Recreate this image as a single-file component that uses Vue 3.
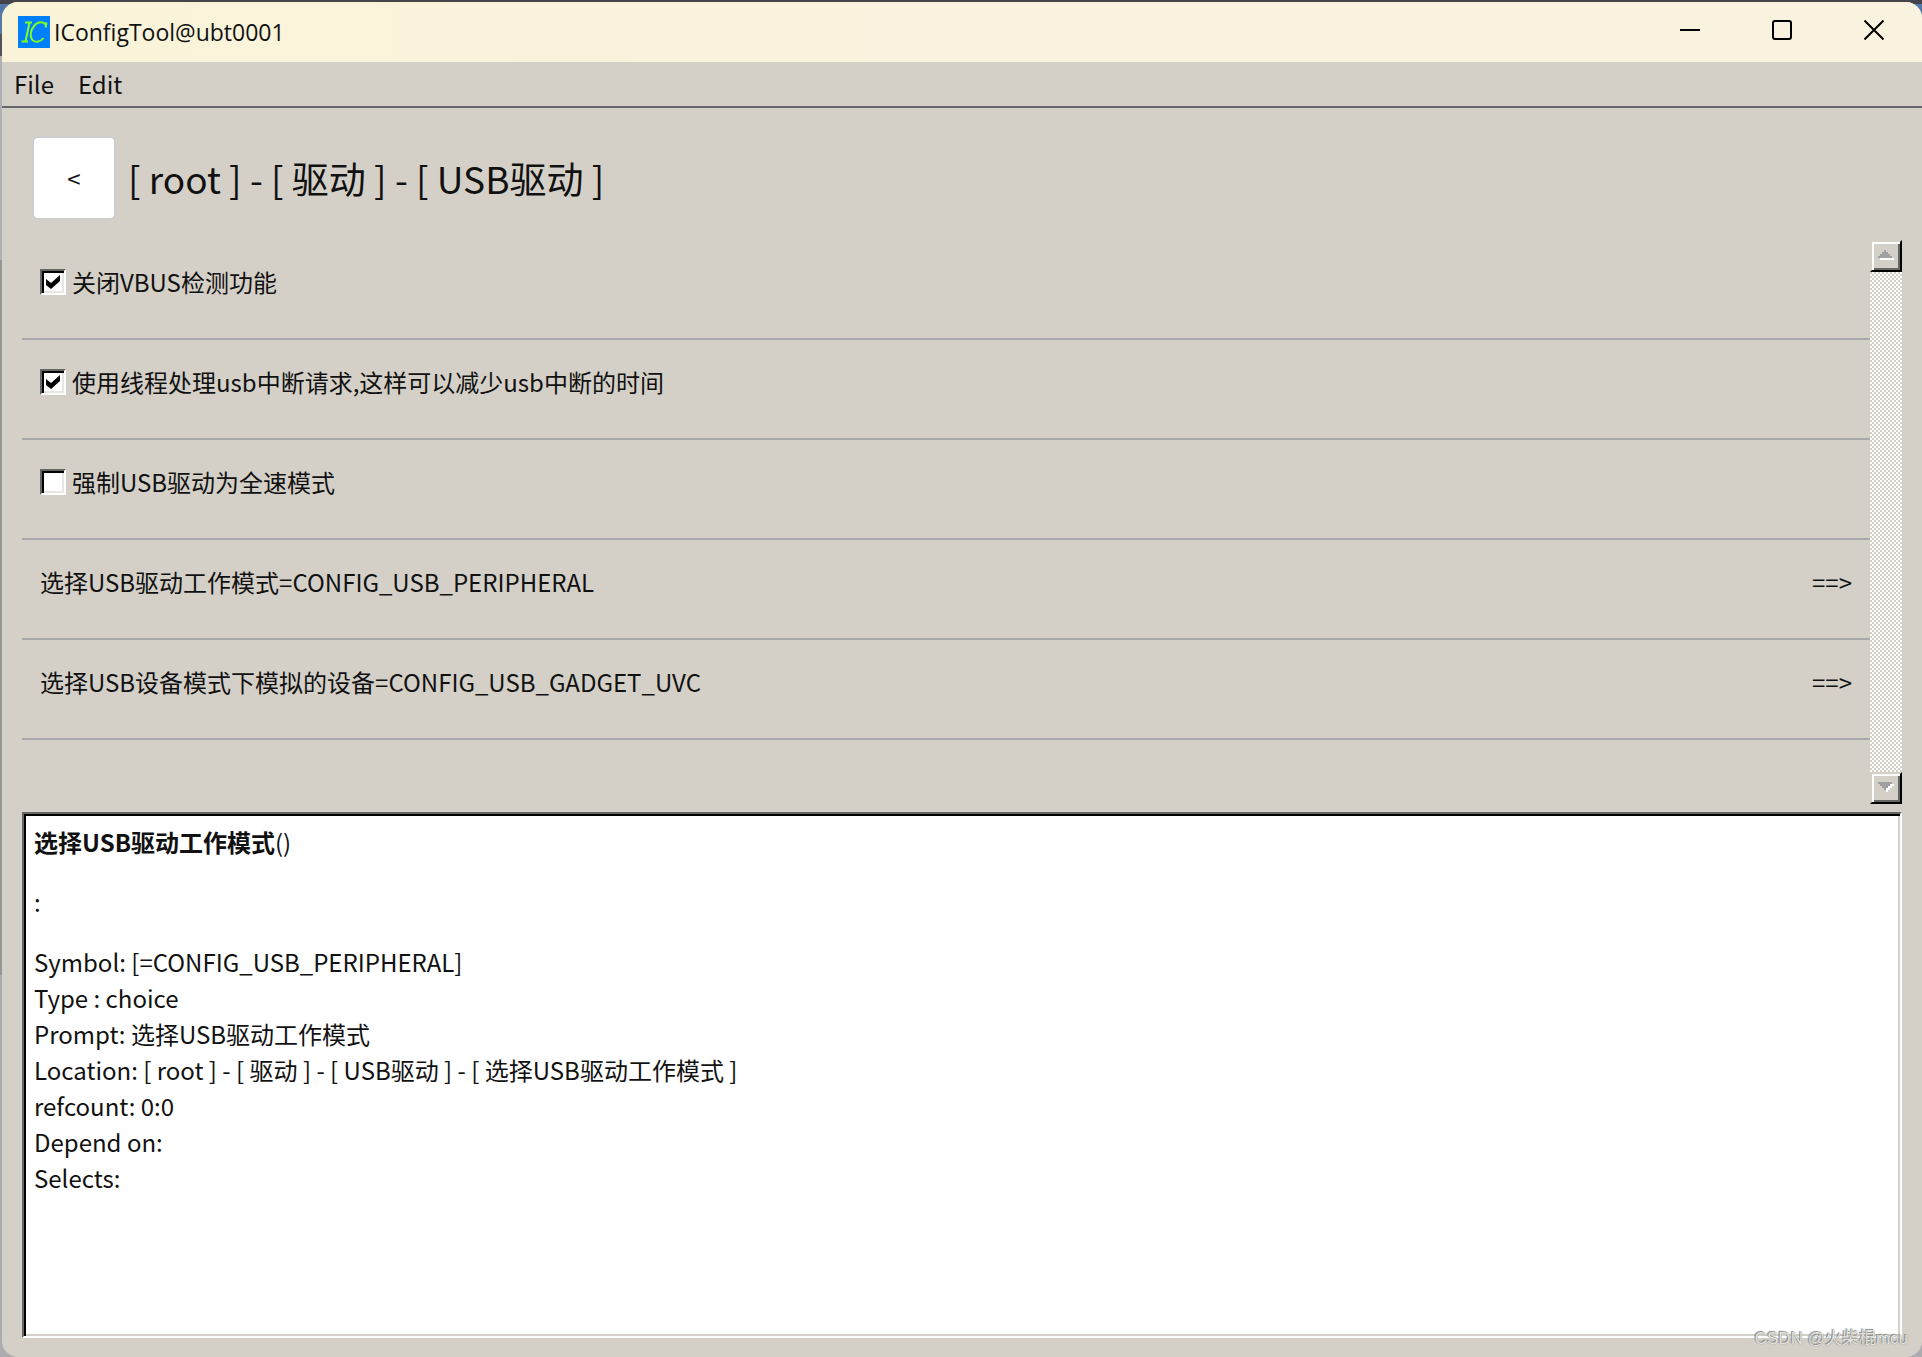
<script setup>
import { ref } from 'vue'

const menus = ['File', 'Edit']

const toggles = ref([
  { id: 'vbus', label: '关闭VBUS检测功能', checked: true },
  { id: 'irq-thread', label: '使用线程处理usb中断请求,这样可以减少usb中断的时间', checked: true },
  { id: 'full-speed', label: '强制USB驱动为全速模式', checked: false }
])

const choices = [
  '选择USB驱动工作模式=CONFIG_USB_PERIPHERAL',
  '选择USB设备模式下模拟的设备=CONFIG_USB_GADGET_UVC'
]

const details = [
  'Symbol: [=CONFIG_USB_PERIPHERAL]',
  'Type : choice',
  'Prompt: 选择USB驱动工作模式',
  'Location: [ root ] - [ 驱动 ] - [ USB驱动 ] - [ 选择USB驱动工作模式 ]',
  'refcount: 0:0',
  'Depend on:',
  'Selects:'
]
</script>

<template>
  <div class="desktop">
    <div class="window">
      <header class="titlebar">
        <svg class="logo" viewBox="0 0 32 32" aria-hidden="true">
          <rect width="32" height="32" fill="#0080ff" />
          <g fill="none" stroke="#80ff20" stroke-width="2">
            <path d="M7 6.500H14M3.500 25.500H10M11.500 6.500L7.500 25.500" />
            <path d="M27.500 11.500L28.500 6.500M28 9C26 5.500 20 5 16.500 9.500C12.500 14 11.500 20 14 23.500C16.500 27 22 26.500 25.500 22" />
          </g>
        </svg>
        <h1 class="title">IConfigTool@ubt0001</h1>
        <div class="window-buttons">
          <button type="button" aria-label="Minimize">
            <svg viewBox="0 0 20 20"><path d="M0 10H20" /></svg>
          </button>
          <button type="button" aria-label="Maximize">
            <svg viewBox="0 0 20 20"><rect x="1" y="1" width="18" height="18" rx="2" /></svg>
          </button>
          <button type="button" aria-label="Close">
            <svg viewBox="0 0 20 20"><path d="M.5 .5L19.500 19.500M19.500 .5L.5 19.500" /></svg>
          </button>
        </div>
      </header>

      <nav class="menubar">
        <button v-for="menu in menus" :key="menu" type="button">{{ menu }}</button>
      </nav>

      <main class="content">
        <div class="path">
          <button type="button" class="back">&lt;</button>
          <h2>[ root ] - [ 驱动 ] - [ USB驱动 ]</h2>
        </div>

        <section class="options">
          <ul>
            <li v-for="item in toggles" :key="item.id">
              <input :id="item.id" v-model="item.checked" type="checkbox" />
              <label :for="item.id">{{ item.label }}</label>
            </li>
            <li v-for="choice in choices" :key="choice">
              <a href="#"><span>{{ choice }}</span><span>==&gt;</span></a>
            </li>
          </ul>
          <div class="scrollbar">
            <button type="button" aria-label="Scroll up">
              <svg viewBox="0 0 16 12" shape-rendering="crispEdges">
                <path fill="#fff" d="M2 8H16V10H2Z" />
                <path fill="#a0a0a4" d="M6 0H8V2H10V4H12V6H14V8H0V6H2V4H4V2H6Z" />
              </svg>
            </button>
            <button type="button" aria-label="Scroll down">
              <svg viewBox="0 0 16 12" shape-rendering="crispEdges">
                <path fill="#fff" d="M12 2H16V4H14V6H12V8H10V10H8V6Z" />
                <path fill="#a0a0a4" d="M0 0H14V2H12V4H10V6H8V8H6V6H4V4H2V2H0Z" />
              </svg>
            </button>
          </div>
        </section>

        <section class="help">
          <p><strong>选择USB驱动工作模式</strong>()</p>
          <p>:</p>
          <p><template v-for="line in details" :key="line">{{ line }}<br /></template></p>
        </section>
      </main>
    </div>
    <div class="watermark">CSDN @火柴棍mcu</div>
  </div>
</template>

<style>
body {
  margin: 0;
}
</style>

<style scoped>
.desktop {
  position: relative;
  display: flex;
  box-sizing: border-box;
  min-height: 100vh;
  padding: 2px 0 0 2px;
  background: linear-gradient(#45444a 0 4px, #5478a8 4px 34px, #55535a 34px 56px, #b0b0b4 56px 260px, #969694 260px 975px, #acacb0 975px);
  font: 24px/36px "Noto Sans CJK SC", sans-serif;
  color: #111;
}

.window {
  flex: 1;
  display: flex;
  flex-direction: column;
  overflow: hidden;
  border-radius: 16px;
  background: #d4d0c8;
}

button {
  padding: 0;
  border: 0;
  background: none;
  font: inherit;
  color: inherit;
}

.titlebar {
  display: flex;
  align-items: center;
  height: 60px;
  padding: 0 2px 0 16px;
  background: linear-gradient(90deg, #f9f4d8, #f9f2de 50%);
}

.logo {
  width: 32px;
  height: 32px;
}

.title {
  margin: 0 0 0 4px;
  font: 23px/32px "Open Sans", "Noto Sans", sans-serif;
}

.window-buttons {
  display: flex;
  align-self: stretch;
  margin-left: auto;
}

.window-buttons button {
  width: 92px;
  height: 56px;
}

.window-buttons svg {
  display: block;
  width: 20px;
  height: 20px;
  margin: 0 auto;
  fill: none;
  stroke: #000;
  stroke-width: 2;
}

.menubar {
  display: flex;
  gap: 24px;
  padding: 4px 12px;
  border-bottom: 2px solid #666;
}

.content {
  flex: 1;
  display: flex;
  flex-direction: column;
  padding: 28px 20px 19px;
}

.path {
  display: flex;
  align-items: center;
  gap: 12px;
  margin-bottom: 20px;
  padding-left: 10px;
}

.back {
  box-sizing: border-box;
  width: 84px;
  height: 84px;
  border: 2px solid #ccced0;
  border-radius: 6px;
  background: #fff;
}

.path h2 {
  margin: 0;
  font-size: 37px;
  font-weight: 400;
  line-height: 56px;
}

.options {
  display: flex;
  height: 564px;
  margin-bottom: 8px;
}

.options ul {
  flex: 1;
  margin: 0;
  padding: 0;
  list-style: none;
}

.options li {
  display: flex;
  align-items: center;
  box-sizing: border-box;
  height: 100px;
  padding: 0 18px 14px;
  border-bottom: 2px solid #a8a8a8;
}

.options a {
  flex: 1;
  display: flex;
  justify-content: space-between;
  color: inherit;
  text-decoration: none;
}

input {
  appearance: none;
  box-sizing: border-box;
  width: 26px;
  height: 26px;
  margin: 0 6px 0 0;
  background: #fff;
  border: 2px solid;
  border-color: #666 #fff #fff #666;
  box-shadow: inset 2px 2px #000, inset -2px -2px #e8e6e2;
}

input:checked::before {
  content: "";
  display: block;
  width: 14px;
  height: 14px;
  margin: 4px;
  background: #000;
  clip-path: polygon(0 28%, 36% 57%, 100% 0, 100% 43%, 36% 100%, 0 71%);
}

.scrollbar {
  display: flex;
  flex-direction: column;
  justify-content: space-between;
  width: 32px;
  background: repeating-conic-gradient(#fff 0 25%, #d4d0c8 0 50%) 0 0 / 4px 4px;
}

.scrollbar button {
  display: flex;
  align-items: center;
  justify-content: center;
  box-sizing: border-box;
  height: 32px;
  border: 2px solid;
  border-color: #d4d0c8 #000 #000 #d4d0c8;
  background: #d4d0c8;
  box-shadow: inset 2px 2px #fff, inset -2px -2px #666;
}

.scrollbar svg {
  width: 16px;
  height: 12px;
}

.help {
  flex: 1;
  padding: 10px;
  border: 2px solid;
  border-color: #666 #fff #fff #666;
  background: #fff;
  box-shadow: inset 2px 2px #000, inset -2px -2px #d4d0c8;
}

.help p {
  margin: 0 0 24px;
}

.watermark {
  position: absolute;
  right: 14px;
  bottom: 6px;
  font: 17px/24px "Liberation Sans", "Noto Sans CJK SC", sans-serif;
  color: #e4e2de;
  text-shadow: 0 0 1px #777, -1px -1px 1px #888;
}
</style>
